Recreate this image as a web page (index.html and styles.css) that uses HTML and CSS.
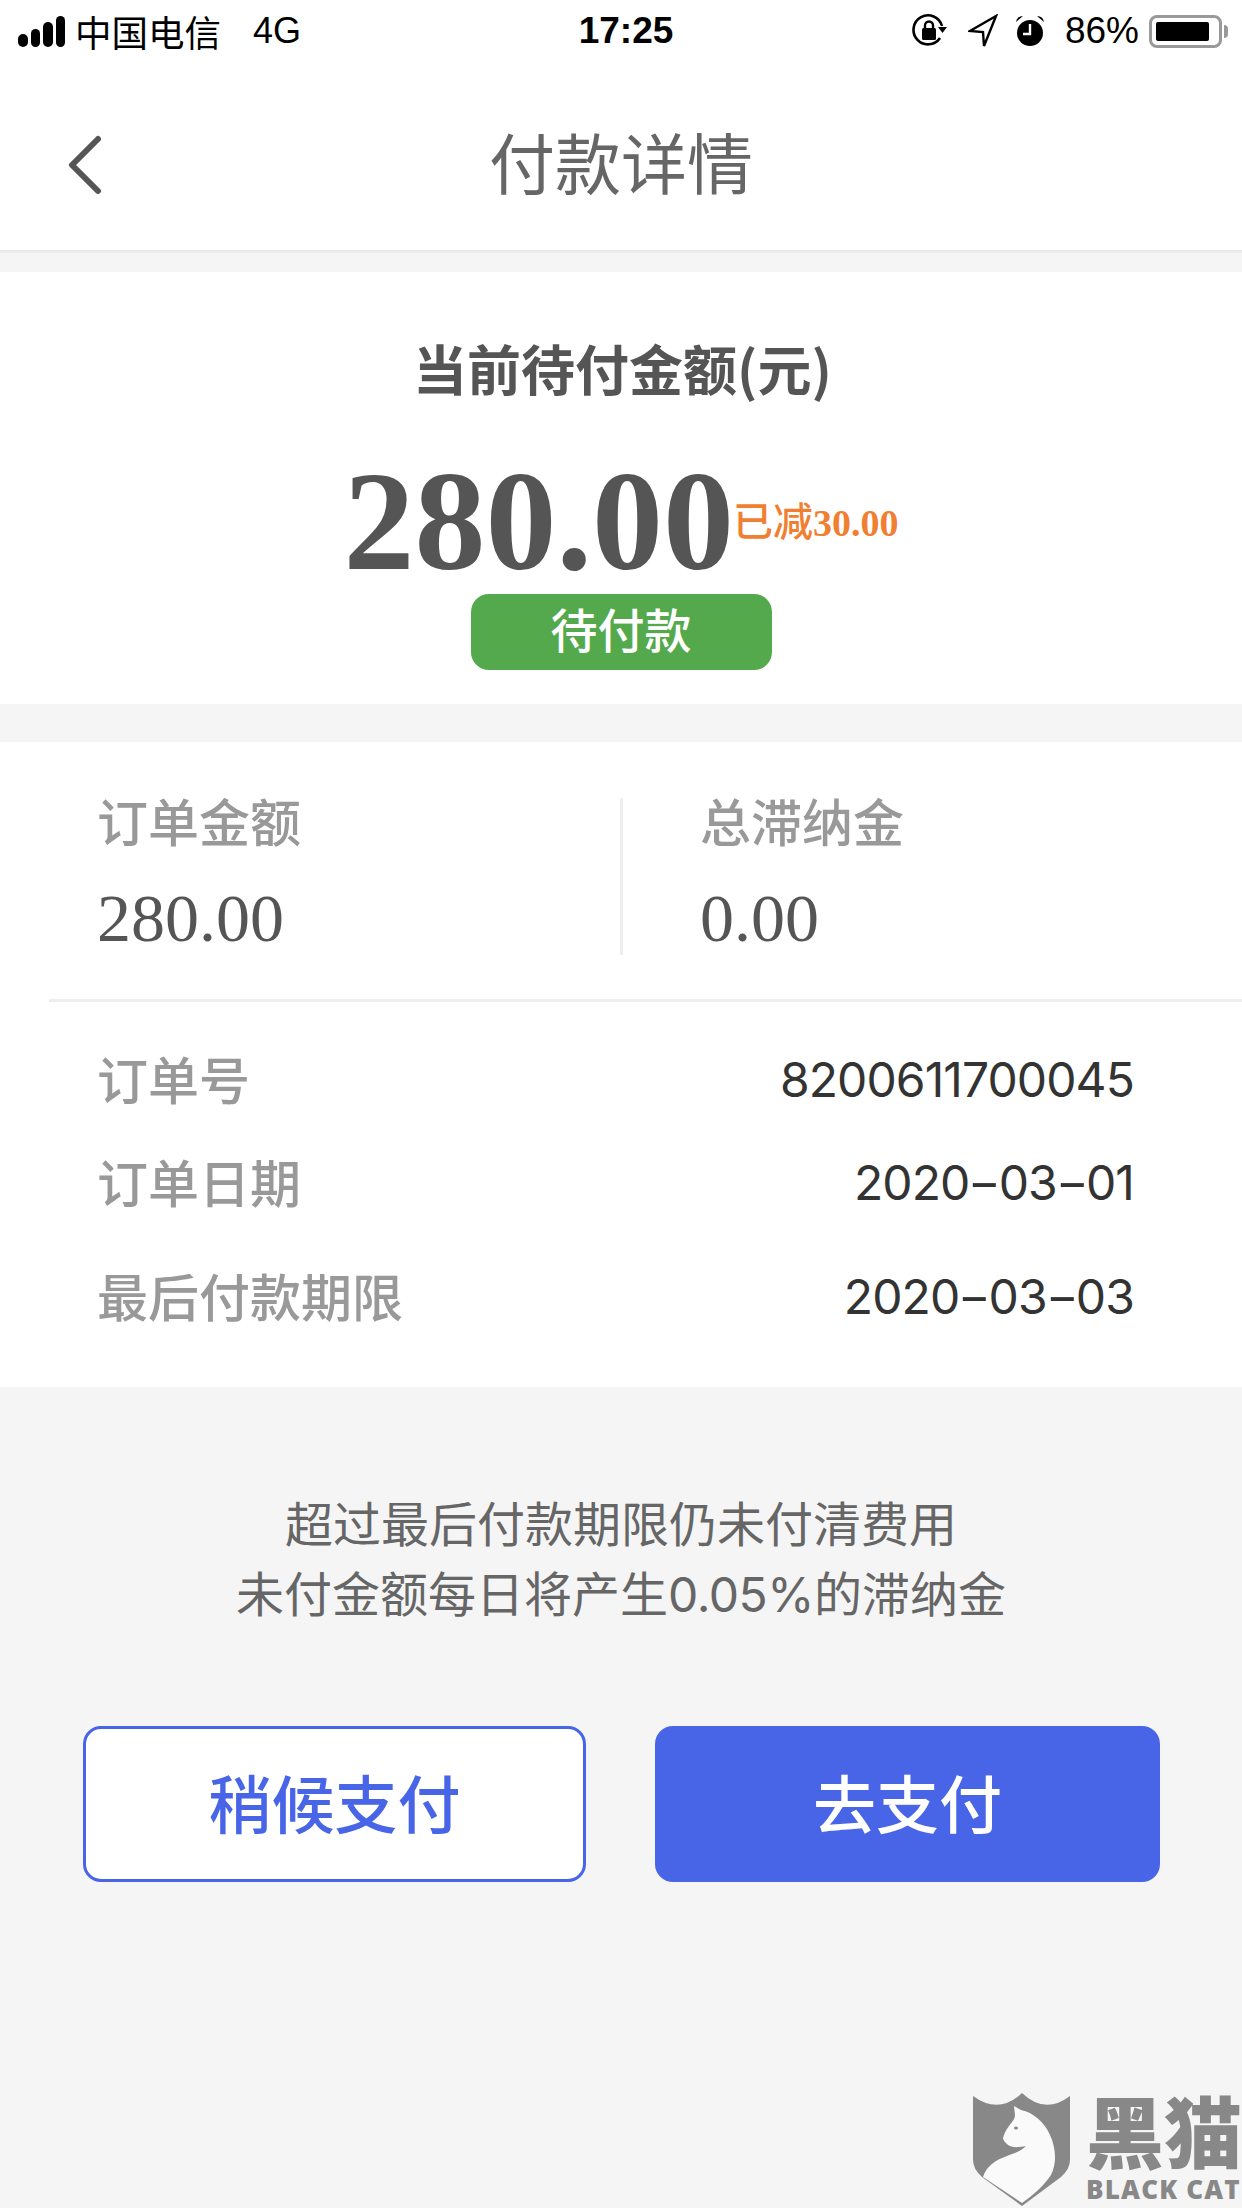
FILE: index.html
```html
<!DOCTYPE html>
<html lang="zh-CN">
<head>
    <meta charset="UTF-8">
    <meta name="viewport" content="width=device-width, initial-scale=1.0">
    <title>付款详情</title>
    <link rel="stylesheet" href="styles.css">
</head>
<body>
    <div class="page">
        <div class="status-bar">
            <div class="status-left">
                <div class="signal"><i class="s1"></i><i class="s2"></i><i class="s3"></i><i class="s4"></i></div>
                <span class="carrier">中国电信</span>
                <span class="network">4G</span>
            </div>
            <div class="status-time">17:25</div>
            <div class="status-right">
                <!-- rotation lock -->
                <svg class="icon-lock" width="36" height="36" viewBox="0 0 36 36">
                    <path d="M29 25 A14.5 14.5 0 1 1 31 13" fill="none" stroke="#000" stroke-width="2.6"/>
                    <path d="M27 14 L36 14 L31.5 20 Z" fill="#000"/>
                    <rect x="11" y="15" width="14" height="12" rx="1.5" fill="#000"/>
                    <path d="M14 16 V12.5 A4 4 0 0 1 22 12.5 V16" fill="none" stroke="#000" stroke-width="2.4"/>
                </svg>
                <!-- location -->
                <svg class="icon-loc" width="30" height="34" viewBox="0 0 30 34">
                    <path d="M28 2 L2 17 L15 18 L16 32 Z" fill="none" stroke="#000" stroke-width="2.4" stroke-linejoin="miter"/>
                </svg>
                <!-- alarm -->
                <svg class="icon-alarm" width="30" height="34" viewBox="0 0 30 34">
                    <circle cx="15" cy="19" r="13" fill="#000"/>
                    <path d="M15 10 V20 H8" fill="none" stroke="#fff" stroke-width="2.4"/>
                    <path d="M1 8 Q2 2 8 2 Z M29 8 Q28 2 22 2 Z" fill="#000"/>
                </svg>
                <span class="battery-text">86%</span>
                <div class="battery"><div class="battery-fill"></div></div>
                <div class="battery-tip"></div>
            </div>
        </div>

        <div class="nav">
            <svg class="back" width="36" height="60" viewBox="0 0 36 60">
                <path d="M31 4 L5 30 L31 56" fill="none" stroke="#555" stroke-width="6" stroke-linecap="round" stroke-linejoin="round"/>
            </svg>
            <h1 class="nav-title">付款详情</h1>
        </div>

        <div class="card summary">
            <div class="summary-title">当前待付金额(元)</div>
            <div class="amount-row">
                <span class="amount">280.00</span>
                <span class="discount"><span class="discount-cn">已减</span><b>30.00</b></span>
            </div>
            <div class="pill">待付款</div>
        </div>

        <div class="card detail">
            <div class="stats">
                <div class="stat">
                    <div class="stat-label">订单金额</div>
                    <div class="stat-value">280.00</div>
                </div>
                <div class="stat stat-right">
                    <div class="stat-label">总滞纳金</div>
                    <div class="stat-value">0.00</div>
                </div>
            </div>
            <div class="rows">
                <div class="row"><span class="row-label">订单号</span><span class="row-value">8200611700045</span></div>
                <div class="row"><span class="row-label">订单日期</span><span class="row-value">2020<span class="dash">-</span>03<span class="dash">-</span>01</span></div>
                <div class="row row-last"><span class="row-label">最后付款期限</span><span class="row-value">2020<span class="dash">-</span>03<span class="dash">-</span>03</span></div>
            </div>
        </div>

        <div class="notice">
            <p>超过最后付款期限仍未付清费用</p>
            <p>未付金额每日将产生<span class="num">0.05%</span>的滞纳金</p>
        </div>

        <div class="actions">
            <button class="btn btn-outline">稍候支付</button>
            <button class="btn btn-solid">去支付</button>
        </div>

        <!-- watermark -->
        <div class="watermark">
            <svg class="shield" width="98" height="114" viewBox="0 0 98 114">
                <path d="M0 3 Q26 22 49 0 Q72 22 97 3 V67 Q97 76 88 84 L49 113 L9 84 Q0 76 0 67 Z" fill="#888"/>
                <path d="M41 13 L48 17 C60 19 72 30 77 42 C83 55 84 70 78 82 C70 94 60 102 49 110 L10 84 C13 74 22 67 34 63 C42 60 48 58 53 53 C47 54 42 55 37 53 C33 51 30 47 30 45 C31 41 33 37 36 33 C39 29 42 26 42 22 Z" fill="#fafafa"/>
                <ellipse cx="43" cy="35" rx="2" ry="1.6" fill="#888"/>
            </svg>
            <div class="wm-text">
                <div class="wm-cn">黑猫</div>
                <div class="wm-en">BLACK CAT</div>
            </div>
        </div>
    </div>
</body>
</html>
```

FILE: styles.css
```css
* {
    box-sizing: border-box;
}

body {
    margin: 0;
    font-family: "Liberation Sans", "Noto Sans CJK SC", sans-serif;
    background: #f5f5f5;
}

.page {
    position: relative;
    width: 1242px;
    height: 2208px;
    overflow: hidden;
    background: #f5f5f5;
}

/* status bar */
.status-bar {
    display: grid;
    grid-template-columns: 1fr auto 1fr;
    align-items: center;
    height: 62px;
    padding: 0 14px 0 18px;
    background: #fff;
    color: #000;
    font-size: 36px;
}

.status-left {
    display: flex;
    align-items: center;
}

.signal {
    display: flex;
    align-items: flex-end;
    gap: 3px;
    height: 32px;
    margin-right: 10px;
}

.signal i {
    display: block;
    width: 9.5px;
    background: #000;
    border-radius: 5px;
}

.s1 { height: 13px; }
.s2 { height: 18px; }
.s3 { height: 25px; }
.s4 { height: 31px; }

.carrier {
    font-size: 36.5px;
}

.network {
    margin-left: 32px;
}

.status-time {
    margin-left: 6px;
    font-size: 37px;
    font-weight: 700;
}

.status-right {
    display: flex;
    align-items: center;
    justify-content: flex-end;
}

.icon-lock { margin-right: 21px; }
.icon-loc { margin-right: 17px; }
.icon-alarm { margin-right: 20px; }

.battery-text {
    margin-right: 10px;
    font-size: 37px;
}

.battery {
    width: 73px;
    height: 33px;
    padding: 4px;
    border: 3px solid #999;
    border-radius: 8px;
}

.battery-fill {
    width: 53px;
    height: 100%;
    background: #000;
    border-radius: 2px;
}

.battery-tip {
    width: 4px;
    height: 13px;
    margin-left: 2px;
    background: #999;
    border-radius: 0 4px 4px 0;
}

/* nav */
.nav {
    position: relative;
    display: flex;
    align-items: center;
    justify-content: center;
    height: 191px;
    padding-top: 8px;
    background: #fff;
    border-bottom: 3px solid #ebebeb;
}

.back {
    position: absolute;
    left: 67px;
    top: 73px;
}

.nav-title {
    margin: 0;
    font-size: 66px;
    font-weight: 400;
    color: #666;
}

/* cards */
.card {
    background: #fff;
}

.summary {
    display: flex;
    flex-direction: column;
    align-items: center;
    height: 432px;
    margin-top: 19px;
    padding-top: 59px;
}

.summary-title {
    padding-left: 3px;
    font-family: "Noto Sans CJK SC", sans-serif;
    font-size: 54px;
    line-height: 74px;
    font-weight: 700;
    color: #555;
}

.amount-row {
    display: flex;
    align-items: center;
    height: 142px;
    margin-top: 43px;
}

.amount {
    position: relative;
    top: 2px;
    font-family: "Liberation Serif", serif;
    font-size: 142px;
    font-weight: 700;
    color: #555;
}

.discount {
    margin-left: -1px;
    font-size: 38px;
    color: #f07f32;
}

.discount-cn {
    font-size: 40px;
    font-weight: 500;
}

.discount b {
    font-family: "Liberation Serif", serif;
}

.pill {
    width: 301px;
    height: 76px;
    margin-top: 4px;
    background: #53a94c;
    border-radius: 18px;
    color: #fff;
    font-size: 47px;
    font-weight: 500;
    line-height: 76px;
    text-align: center;
}

.detail {
    height: 645px;
    margin-top: 38px;
}

.stats {
    display: grid;
    grid-template-columns: 571px 1fr;
    height: 260px;
    margin-left: 49px;
    padding-top: 56px;
    border-bottom: 3px solid #eee;
}

.stat {
    height: 157px;
    padding-left: 48px;
}

.stat-right {
    padding-left: 77px;
    border-left: 3px solid #eee;
}

.stat-label {
    margin-top: -3px;
    font-size: 51px;
    font-weight: 500;
    line-height: 60px;
    color: #999;
}

.stat-value {
    margin-top: 18px;
    font-family: "Liberation Serif", serif;
    font-size: 68px;
    line-height: 90px;
    color: #555;
}

.rows {
    padding: 24px 108px 0 97px;
}

.row {
    display: flex;
    align-items: center;
    justify-content: space-between;
    height: 103px;
}

.row-last {
    margin-top: 11px;
}

.row-label {
    font-size: 51px;
    font-weight: 500;
    color: #999;
}

.row-value {
    padding-top: 4px;
    font-family: Inter, "Liberation Sans", sans-serif;
    font-size: 48px;
    letter-spacing: -0.9px;
    color: #333;
}

.dash {
    display: inline-block;
    margin: 0 4px;
    transform: scaleX(1.5);
}

/* notice + buttons */
.notice {
    margin-top: 99px;
    font-family: "Noto Sans CJK SC", sans-serif;
    text-align: center;
    font-size: 48px;
    line-height: 70px;
    color: #666;
}

.notice p {
    margin: 0;
}

.num {
    font-family: Inter, sans-serif;
    letter-spacing: -0.5px;
}

.actions {
    display: flex;
    gap: 69px;
    margin-top: 96px;
    padding-left: 83px;
}

.btn {
    height: 156px;
    padding-bottom: 8px;
    border-radius: 18px;
    font-family: inherit;
    font-size: 63px;
    font-weight: 500;
}

.btn-outline {
    width: 503px;
    background: #fff;
    border: 3px solid #4865e8;
    color: #4865e8;
}

.btn-solid {
    width: 505px;
    background: #4865e8;
    border: none;
    color: #fff;
}

/* watermark sits over the bottom corner */
.watermark {
    position: absolute;
    left: 973px;
    top: 2093px;
    display: flex;
    gap: 15px;
    color: #888;
}

.wm-text {
    padding-top: 5px;
}

.wm-cn {
    font-size: 78px;
    line-height: 76px;
    font-weight: 900;
    white-space: nowrap;
}

.wm-en {
    font-family: "Open Sans", sans-serif;
    font-size: 26px;
    line-height: 30px;
    font-weight: 800;
    letter-spacing: 1.2px;
    white-space: nowrap;
}
```
